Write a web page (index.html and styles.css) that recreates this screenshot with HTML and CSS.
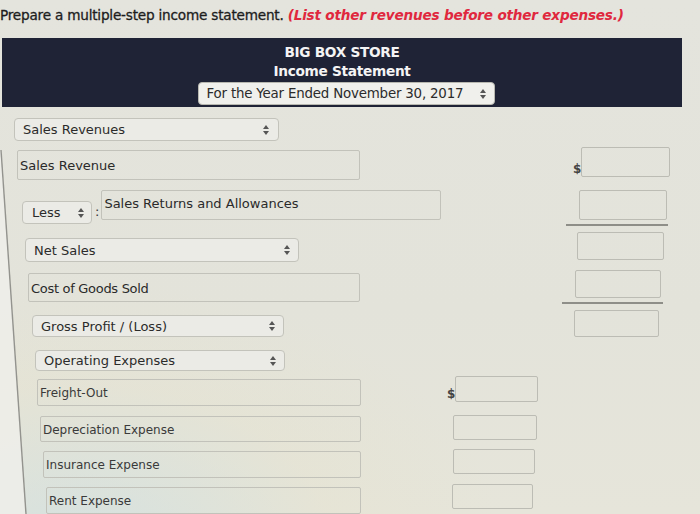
FILE: index.html
```html
<!DOCTYPE html>
<html>
<head>
<meta charset="utf-8">
<link rel="stylesheet" href="styles.css">
</head>
<body>
<div class="page">
  <p class="prompt">Prepare a multiple-step income statement. <em>(List other revenues before other expenses.)</em></p>

  <div class="banner">
    <div class="co">BIG BOX STORE</div>
    <div class="co">Income Statement</div>
    <div class="sel period"><span>For the Year Ended November 30, 2017</span><svg class="arr" viewBox="0 0 6 10"><path d="M3 0L6 4H0z M3 10L0 6H6z"/></svg></div>
  </div>

  <div class="form">
    <div class="row r1">
      <div class="lab"><div class="sel w1"><span>Sales Revenues</span><svg class="arr" viewBox="0 0 6 10"><path d="M3 0L6 4H0z M3 10L0 6H6z"/></svg></div></div>
    </div>

    <div class="row r2">
      <div class="lab"><div class="inp w2">Sales Revenue</div></div>
      <div class="amt"><span class="dol">$</span><div class="box"></div></div>
    </div>

    <div class="row r3">
      <div class="lab">
        <div class="sel less"><span>Less</span><svg class="arr" viewBox="0 0 6 10"><path d="M3 0L6 4H0z M3 10L0 6H6z"/></svg></div>
        <span class="colon">:</span>
        <div class="inp w3 top">Sales Returns and Allowances</div>
      </div>
      <div class="amt under"><span class="dol"></span><div class="box"></div></div>
    </div>

    <div class="row r4">
      <div class="lab"><div class="sel w4"><span>Net Sales</span><svg class="arr" viewBox="0 0 6 10"><path d="M3 0L6 4H0z M3 10L0 6H6z"/></svg></div></div>
      <div class="amt"><span class="dol"></span><div class="box"></div></div>
    </div>

    <div class="row r5">
      <div class="lab"><div class="inp w5">Cost of Goods Sold</div></div>
      <div class="amt under"><span class="dol"></span><div class="box"></div></div>
    </div>

    <div class="row r6">
      <div class="lab"><div class="sel w6"><span>Gross Profit / (Loss)</span><svg class="arr" viewBox="0 0 6 10"><path d="M3 0L6 4H0z M3 10L0 6H6z"/></svg></div></div>
      <div class="amt"><span class="dol"></span><div class="box"></div></div>
    </div>

    <div class="row r7">
      <div class="lab"><div class="sel w7"><span>Operating Expenses</span><svg class="arr" viewBox="0 0 6 10"><path d="M3 0L6 4H0z M3 10L0 6H6z"/></svg></div></div>
    </div>

    <div class="row r8">
      <div class="lab"><div class="inp w8 small">Freight-Out</div></div>
      <div class="amt"><span class="dol">$</span><div class="box"></div></div>
    </div>

    <div class="row r9">
      <div class="lab"><div class="inp w9 small">Depreciation Expense</div></div>
      <div class="amt"><span class="dol"></span><div class="box"></div></div>
    </div>

    <div class="row r10">
      <div class="lab"><div class="inp w10 small">Insurance Expense</div></div>
      <div class="amt"><span class="dol"></span><div class="box"></div></div>
    </div>

    <div class="row r11">
      <div class="lab"><div class="inp w11 small">Rent Expense</div></div>
      <div class="amt"><span class="dol"></span><div class="box"></div></div>
    </div>
  </div>

  <svg class="edge" viewBox="0 0 40 514" preserveAspectRatio="none">
    <polygon points="0,150 1,150 26,514 0,514" fill="#eeeeea" opacity="0.85"/>
    <line x1="1" y1="150" x2="26" y2="514" stroke="#93938e" stroke-width="1.4"/>
  </svg>
</div>
</body>
</html>
```

FILE: styles.css
```css
html, body {
  margin: 0;
  padding: 0;
}
body {
  width: 700px;
  height: 514px;
  overflow: hidden;
  font-family: "DejaVu Sans", Verdana, sans-serif;
  color: #2a2a2a;
  background:
    radial-gradient(ellipse 420px 260px at 80px 540px, rgba(200, 222, 228, 0.55), rgba(230, 226, 200, 0.25) 60%, rgba(0,0,0,0) 100%),
    linear-gradient(180deg, #e4e4dd 0%, #e3e3da 60%, #e6e5da 100%);
}
.page {
  position: relative;
  height: 514px;
}
.edge {
  position: absolute;
  left: 0;
  top: 0;
  width: 40px;
  height: 514px;
  pointer-events: none;
}
.prompt {
  margin: 0;
  padding: 7px 0 0 0;
  height: 38px;
  box-sizing: border-box;
  font-size: 13.6px;
  letter-spacing: -0.2px;
  color: #1d1d1d;
  white-space: nowrap;
  -webkit-text-stroke: 0.3px #1d1d1d;
}
.prompt em {
  color: #e0283e;
  font-weight: bold;
  font-style: italic;
  -webkit-text-stroke: 0;
}
.banner {
  margin-left: 2px;
  width: 680px;
  height: 69px;
  background: #1f2336;
  display: flex;
  flex-direction: column;
  align-items: center;
  padding-top: 5px;
  box-sizing: border-box;
}
.co {
  color: #f4f4f4;
  font-weight: bold;
  font-size: 13.7px;
  line-height: 19px;
  letter-spacing: -0.3px;
}
.sel {
  display: flex;
  align-items: center;
  justify-content: space-between;
  box-sizing: border-box;
  background: #ebebe6;
  border: 1px solid #c3c3bb;
  border-radius: 4px;
  font-size: 13px;
  color: #2b2b2b;
  padding: 0 8px 0 8px;
  white-space: nowrap;
}
.arr {
  width: 6px;
  height: 10px;
  fill: #555;
  flex: none;
}
.period {
  margin-top: 1px;
  margin-left: 8px;
  width: 297px;
  height: 23px;
  background: #f0f0ec;
  border-color: #b8b8b0;
  font-size: 13.4px;
  letter-spacing: -0.2px;
  padding-left: 8px;
  padding-right: 8px;
}
.form {
  display: flex;
  flex-direction: column;
}
.row {
  display: grid;
  grid-template-columns: var(--ax) auto;
  align-items: start;
  height: var(--h);
}
.lab {
  display: flex;
  align-items: flex-start;
  padding-left: var(--ind);
  padding-top: var(--lt);
}
.amt {
  display: flex;
  align-items: flex-start;
  padding-top: var(--at);
  position: relative;
}
.dol {
  width: 8px;
  font-size: 12px;
  font-weight: bold;
  color: #444;
  padding-top: calc(var(--bh) - 15px);
}
.box {
  width: var(--bw);
  height: var(--bh);
  box-sizing: border-box;
  border: 1px solid #bcbcb4;
  border-radius: 2px;
}
.under::after {
  content: "";
  position: absolute;
  left: var(--ul);
  width: var(--uw);
  top: calc(var(--at) + var(--bh) + 4px);
  height: 2px;
  background: #8e8e88;
}
.inp {
  box-sizing: border-box;
  border: 1px solid #c2c2ba;
  border-radius: 2px;
  font-size: 13px;
  color: #2a2a2a;
  padding: 7px 0 0 2px;
  white-space: nowrap;
}
.inp.top {
  padding-top: 5px;
}
.inp.small {
  font-size: 12px;
  color: #3a3a3a;
  padding-top: 6px;
}

/* per-row geometry (photo perspective) */
.r1 { --h: 40px; --ax: 560px; --ind: 14px; --lt: 11px; }
.w1 { width: 265px; height: 23px; padding-left: 8px; padding-right: 9px; }

.r2 { --h: 43px; --ax: 573px; --ind: 17px; --lt: 3px; --at: 0px; --bw: 89px; --bh: 30px; }
.w2 { width: 343px; height: 30px; }

.r3 { --h: 42px; --ax: 571px; --ind: 22px; --lt: 0px; --at: 0px; --bw: 88px; --bh: 30px; --ul: -5px; --uw: 102px; }
.less { width: 70px; height: 23px; margin-top: 11px; padding-left: 9px; padding-right: 7px; }
.colon { font-size: 13px; margin: 14px 2px 0 3px; color: #333; }
.w3 { width: 340px; height: 30px; }

.r4 { --h: 38px; --ax: 569px; --ind: 25px; --lt: 6px; --at: 0px; --bw: 87px; --bh: 28px; }
.w4 { width: 274px; height: 24px; }

.r5 { --h: 40px; --ax: 567px; --ind: 28px; --lt: 3px; --at: 0px; --bw: 86px; --bh: 28px; --ul: -5px; --uw: 101px; }
.w5 { width: 332px; height: 29px; letter-spacing: -0.3px; }

.r6 { --h: 40px; --ax: 566px; --ind: 32px; --lt: 5px; --at: 0px; --bw: 85px; --bh: 27px; }
.w6 { width: 252px; height: 22px; }

.r7 { --h: 26px; --ax: 447px; --ind: 35px; --lt: 0px; }
.w7 { width: 250px; height: 21px; }

.r8 { --h: 39px; --ax: 447px; --ind: 37px; --lt: 3px; --at: 0px; --bw: 83px; --bh: 26px; }
.w8 { width: 324px; height: 27px; }

.r9 { --h: 34px; --ax: 445px; --ind: 40px; --lt: 1px; --at: 0px; --bw: 84px; --bh: 25px; }
.w9 { width: 321px; height: 26px; }

.r10 { --h: 35px; --ax: 445px; --ind: 43px; --lt: 2px; --at: 0px; --bw: 82px; --bh: 25px; }
.w10 { width: 318px; height: 27px; }

.r11 { --h: 35px; --ax: 444px; --ind: 46px; --lt: 3px; --at: 0px; --bw: 81px; --bh: 25px; }
.w11 { width: 315px; height: 27px; }
```
